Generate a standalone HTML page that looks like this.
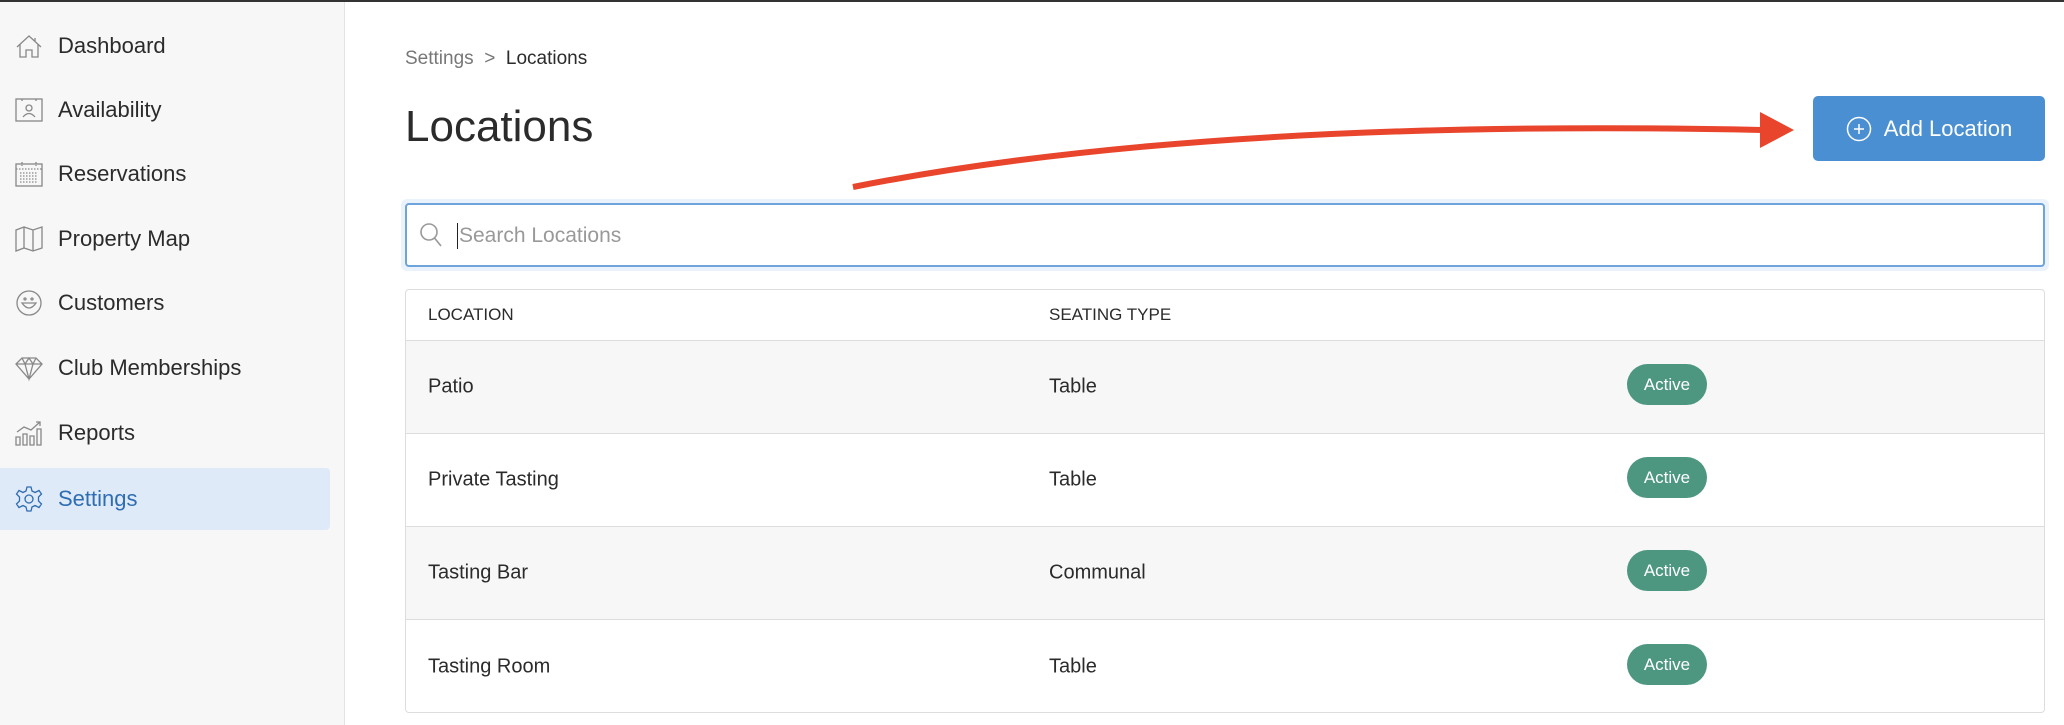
<!DOCTYPE html>
<html><head><style>
*{box-sizing:border-box;margin:0;padding:0}
body{width:2064px;height:725px;background:#fff;font-family:"Liberation Sans",sans-serif;color:#2b2b2b;position:relative;overflow:hidden}
.top{position:absolute;left:0;top:0;width:2064px;height:2px;background:#333}
.side{position:absolute;left:0;top:2px;width:345px;height:723px;background:#f7f7f7;border-right:1px solid #e4e4e4}
.nav{position:absolute;left:0;height:62px;width:330px;display:flex;align-items:center;font-size:22px;color:#2b2b2b}
.nav svg{position:absolute;left:15px;width:28px;height:28px;fill:none;stroke:#888;stroke-width:1.3}
.nav span{position:absolute;left:58px}
.nav.act{background:#dfeaf8;border-radius:0 4px 4px 0;color:#2f6db3}
.nav.act svg{stroke:#2f6db3}
.crumb{position:absolute;left:405px;top:48px;font-size:19px;color:#777}
.crumb b{font-weight:normal;color:#2b2b2b}
h1{position:absolute;left:405px;top:102px;font-size:44px;font-weight:normal;color:#2b2b2b}
.btn{position:absolute;left:1813px;top:96px;width:232px;height:65px;background:#4a8fd1;border-radius:5px;color:#fff;font-size:22px;display:flex;align-items:center;justify-content:center;gap:12px}
.search{position:absolute;left:401px;top:199px;width:1648px;height:72px;border-radius:6px;background:#eaf3fc}
.search .in{position:absolute;left:4px;top:4px;right:4px;bottom:4px;background:#fff;border:2px solid #6fa3dc;border-radius:4px}
.search .ph{position:absolute;left:50px;top:18px;font-size:21px;color:#999;border-left:1.5px solid #222;padding-left:1px;line-height:26px}
.tbl{position:absolute;left:405px;top:289px;width:1640px;height:424px;border:1px solid #ddd;border-radius:4px;overflow:hidden}
.row{position:absolute;left:0;width:100%;border-top:1px solid #ddd;font-size:20px}
.row div{position:absolute;top:50%;transform:translateY(-50%)}
.row .badge{transform:translateY(-56%)}
.hd{font-size:17px;text-transform:uppercase}
.badge{left:1221px;width:80px;height:41px;border-radius:21px;background:#4d9780;color:#fff;font-size:17px;display:flex;align-items:center;justify-content:center}
</style></head><body>
<div class="top"></div>
<div class="side">
<div class="nav" style="top:13px"><svg viewBox="0 0 28 28"><path d="M2 15 L14 4 L26 15 M5 12 V25 H11 V18 H17 V25 H23 V12 M20 6 V9"/></svg><span>Dashboard</span></div>
<div class="nav" style="top:77px"><svg viewBox="0 0 28 28"><rect x="1" y="3" width="26" height="22"/><circle cx="14" cy="12" r="3"/><path d="M8 21 Q14 14 20 21 M7 3V5 M21 3V5"/></svg><span>Availability</span></div>
<div class="nav" style="top:141px"><svg viewBox="0 0 28 28"><rect x="1" y="4" width="26" height="22"/><path d="M1 9H27 M7 2V6 M21 2V6 M5 13H23 M5 16H23 M5 19H23 M5 22H23" stroke-dasharray="1.5 1.5"/></svg><span>Reservations</span></div>
<div class="nav" style="top:206px"><svg viewBox="0 0 28 28"><path d="M1 5 L9 2 L18 5 L27 2 V23 L18 26 L9 23 L1 26Z M9 2V23 M18 5V26"/></svg><span>Property Map</span></div>
<div class="nav" style="top:270px"><svg viewBox="0 0 28 28"><circle cx="14" cy="14" r="12"/><circle cx="10" cy="10" r="1"/><circle cx="17" cy="10" r="1"/><path d="M7 14 Q14 24 21 14Z"/></svg><span>Customers</span></div>
<div class="nav" style="top:335px"><svg viewBox="0 0 28 28"><path d="M1 10 L7 4 H21 L27 10 L14 25Z M1 10H27 M7 4 L10 10 L14 25 L18 10 L21 4 M10 10 L14 4 L18 10"/></svg><span>Club Memberships</span></div>
<div class="nav" style="top:400px"><svg viewBox="0 0 28 28"><path d="M1 18H5V26H1Z M8 15H12V26H8Z M15 17H19V26H15Z M22 10H26V26H22Z M2 13 L9 8 L16 11 L25 3 M21 3H25V7"/></svg><span>Reports</span></div>
<div class="nav act" style="top:466px"><svg viewBox="0 0 28 28"><circle cx="14" cy="14" r="4"/><path d="M12 2H16L17 6 L20 7.5 L24 5.5 L26.5 9 L23.5 12 V16 L26.5 19 L24 22.5 L20 20.5 L17 22 L16 26H12L11 22 L8 20.5 L4 22.5 L1.5 19 L4.5 16V12 L1.5 9 L4 5.5 L8 7.5 L11 6Z"/></svg><span>Settings</span></div>
</div>
<div class="crumb">Settings &nbsp;&gt;&nbsp; <b>Locations</b></div>
<h1>Locations</h1>
<svg style="position:absolute;left:0;top:0" width="2064" height="725"><path d="M853 187 Q1200 118 1762 130" stroke="#e8452c" stroke-width="6" fill="none"/><path d="M1760 112 L1794 130 L1760 148Z" fill="#e8452c"/></svg>
<div class="btn"><svg width="26" height="26" viewBox="0 0 26 26" fill="none" stroke="#fff" stroke-width="1.5"><circle cx="13" cy="13" r="11.5"/><path d="M13 8V18M8 13H18"/></svg>Add Location</div>
<div class="search"><div class="in"><svg style="position:absolute;left:12px;top:16px" width="26" height="28" viewBox="0 0 26 28" fill="none" stroke="#999" stroke-width="1.6"><circle cx="10" cy="11" r="8"/><path d="M15.5 17 L22 25"/></svg><div class="ph">Search Locations</div></div></div>
<div class="tbl">
<div class="row hd" style="top:-1px;height:51px;border:0"><div style="left:22px">Location</div><div style="left:643px">Seating Type</div></div>
<div class="row" style="top:50px;height:93px;background:#f7f7f7"><div style="left:22px">Patio</div><div style="left:643px">Table</div><div class="badge">Active</div></div>
<div class="row" style="top:143px;height:93px"><div style="left:22px">Private Tasting</div><div style="left:643px">Table</div><div class="badge">Active</div></div>
<div class="row" style="top:236px;height:93px;background:#f7f7f7"><div style="left:22px">Tasting Bar</div><div style="left:643px">Communal</div><div class="badge">Active</div></div>
<div class="row" style="top:329px;height:95px"><div style="left:22px">Tasting Room</div><div style="left:643px">Table</div><div class="badge">Active</div></div>
</div>
</body></html>
